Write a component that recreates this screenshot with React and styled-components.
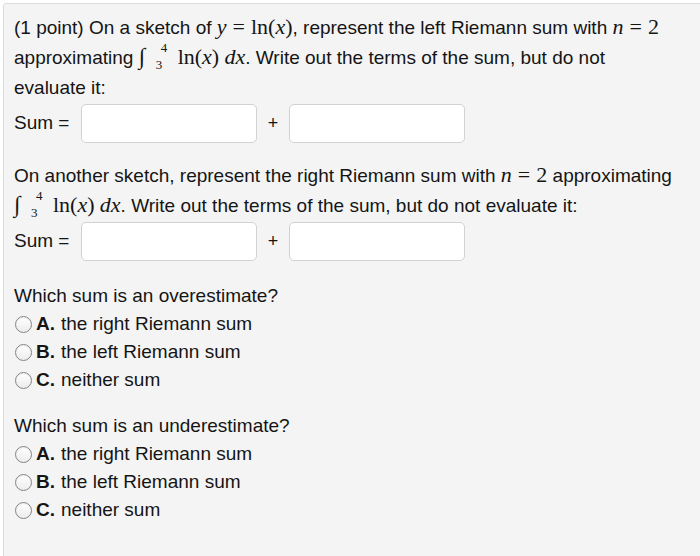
import React from "react";
import styled, { createGlobalStyle } from "styled-components";

const Global = createGlobalStyle`
  html, body { margin: 0; padding: 0; background: #fff; }
  body { font-family: "Liberation Sans", Arial, sans-serif; }
`;

const Panel = styled.div`
  margin: 3px 0 0 3px;
  width: 720px;
  min-height: 580px;
  box-sizing: border-box;
  background: #f4f4f4;
  border: 1px solid #dcdcdc;
  border-radius: 3px;
  padding: 9px 10px;
  color: #151515;
  font-size: 19px;
  line-height: 30px;
`;

const Para = styled.div`
  width: 665px;
  margin-top: ${(p) => p.$mt || 0}px;
`;

const M = styled.span`
  font-family: "Liberation Serif", "Times New Roman", serif;
  font-size: 22px;
  line-height: 20px;
  font-style: ${(p) => (p.$i ? "italic" : "normal")};
`;

const Rel = styled.span`
  font-family: "Liberation Serif", "Times New Roman", serif;
  font-size: 22px;
  line-height: 20px;
  margin: 0 6px;
`;

const IntSign = styled.span`
  display: inline-block;
  width: 10px;
  font-family: "Liberation Serif", "Times New Roman", serif;
  font-size: 23px;
  line-height: 20px;
  font-style: italic;
`;

const Limits = styled.span`
  display: inline-block;
  vertical-align: -5px;
  font-family: "Liberation Serif", "Times New Roman", serif;
  font-size: 13px;
  line-height: 10px;
  width: 12px;
  margin: 0 10px 0 7px;
`;

const Lim = styled.span`
  display: block;
  padding-left: ${(p) => p.$pl || 0}px;
  margin-top: ${(p) => p.$mt || 0}px;
`;

const Row = styled.div`
  display: flex;
  align-items: center;
  height: 40px;
`;

const Label = styled.span`
  width: 67px;
`;

const Input = styled.div`
  width: 176px;
  height: 39px;
  box-sizing: border-box;
  background: #fff;
  border: 1px solid #d2d2d2;
  border-radius: 5px;
`;

const Plus = styled.span`
  width: 32px;
  text-align: center;
  font-size: 18px;
`;

const Question = styled.div`
  margin-top: ${(p) => p.$mt || 0}px;
  line-height: 28px;
`;

const Option = styled.div`
  display: flex;
  align-items: center;
  height: 28px;
`;

const Radio = styled.span`
  width: 17px;
  height: 17px;
  box-sizing: border-box;
  border: 1px solid #858585;
  border-radius: 50%;
  background: linear-gradient(#ffffff, #ececec);
  box-shadow: inset 0 1px 1px rgba(0, 0, 0, 0.08);
  margin: 0 4px 0 1px;
`;

const Letter = styled.b`
  margin-right: 6px;
`;

const Integral = () => (
  <>
    <IntSign>∫</IntSign>
    <Limits>
      <Lim $pl={5}>4</Lim>
      <Lim $mt={7}>3</Lim>
    </Limits>
  </>
);

const Ln = () => (
  <>
    <Integral />
    <M>ln(</M>
    <M $i>x</M>
    <M>)</M> <M $i>dx</M>
  </>
);

const SumRow = () => (
  <Row>
    <Label>Sum =</Label>
    <Input />
    <Plus>+</Plus>
    <Input />
  </Row>
);

const Options = () => (
  <>
    <Option><Radio /><Letter>A.</Letter>the right Riemann sum</Option>
    <Option><Radio /><Letter>B.</Letter>the left Riemann sum</Option>
    <Option><Radio /><Letter>C.</Letter>neither sum</Option>
  </>
);

export default function App() {
  return (
    <>
      <Global />
      <Panel>
        <Para>
          (1 point) On a sketch of <M $i>y</M><Rel>=</Rel><M>ln(</M><M $i>x</M><M>)</M>, represent the left Riemann sum with{" "}
          <M $i>n</M><Rel>=</Rel><M>2</M> approximating <Ln />. Write out the terms of the sum, but do not evaluate it:
        </Para>
        <SumRow />
        <Para $mt={18}>
          On another sketch, represent the right Riemann sum with <M $i>n</M><Rel>=</Rel><M>2</M> approximating{" "}
          <Ln />. Write out the terms of the sum, but do not evaluate it:
        </Para>
        <SumRow />
        <Question $mt={21}>Which sum is an overestimate?</Question>
        <Options />
        <Question $mt={18}>Which sum is an underestimate?</Question>
        <Options />
      </Panel>
    </>
  );
}
